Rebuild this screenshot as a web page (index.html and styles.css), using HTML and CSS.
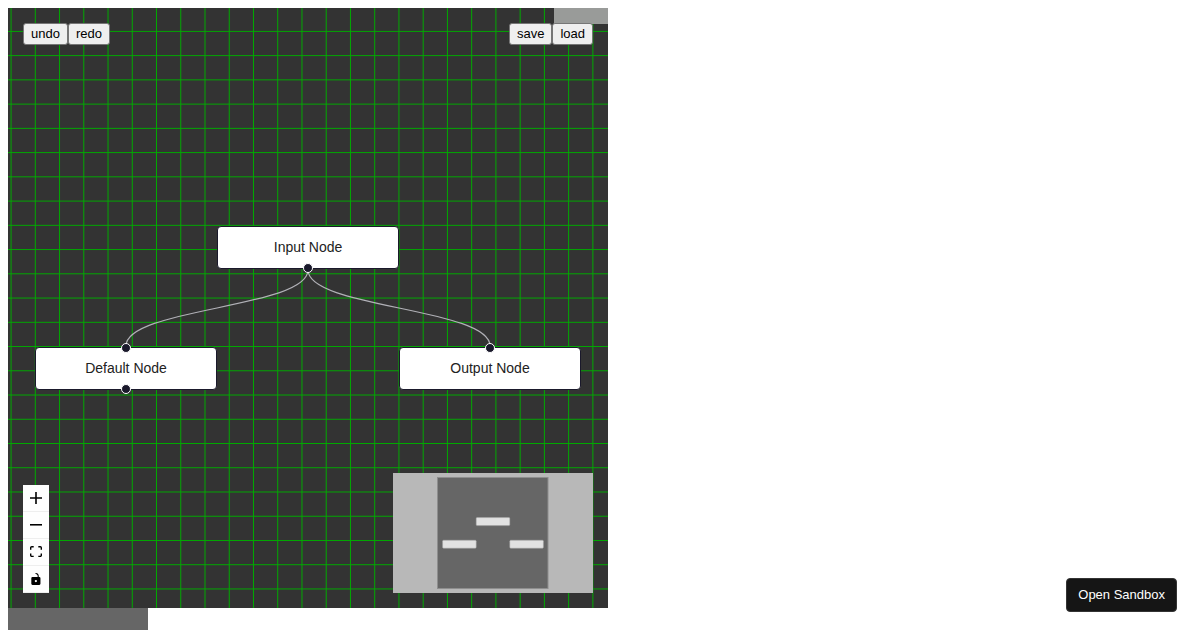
FILE: index.html
```html
<!DOCTYPE html>
<html lang="en">
<head>
    <meta charset="utf-8">
    <title>Flow</title>
    <link rel="stylesheet" href="styles.css">
</head>
<body>
    <div class="flow">
        <svg class="background" aria-hidden="true">
            <pattern id="grid" x="-9.06" y="11.26" width="24.2424" height="24.2424" patternUnits="userSpaceOnUse">
                <path d="M12.12 0V24.2424M0 12.12H24.2424" stroke="#00aa00" stroke-width="1"/>
            </pattern>
            <rect width="100%" height="100%" fill="url(#grid)"/>
        </svg>
        <div class="overview-strip"></div>

        <div class="viewport">
            <svg class="edges" width="600" height="600" aria-hidden="true">
                <path d="M300 262C300 300 118 300 118 338"/>
                <path d="M300 262C300 300 482 300 482 338"/>
            </svg>
            <div class="node node-input">Input Node<span class="handle handle-bottom"></span></div>
            <div class="node node-default"><span class="handle handle-top"></span>Default Node<span class="handle handle-bottom"></span></div>
            <div class="node node-output"><span class="handle handle-top"></span>Output Node</div>
        </div>

        <div class="toolbar">
            <div class="group">
                <button class="btn">undo</button>
                <button class="btn">redo</button>
            </div>
            <div class="group">
                <button class="btn">save</button>
                <button class="btn">load</button>
            </div>
        </div>

        <div class="bottom">
            <div class="controls">
                <button class="control" aria-label="zoom in">
                    <svg viewBox="0 0 32 32"><path d="M32 18.133H18.133V32h-4.266V18.133H0v-4.266h13.867V0h4.266v13.867H32z"/></svg>
                </button>
                <button class="control" aria-label="zoom out">
                    <svg viewBox="0 0 32 5"><path d="M0 0h32v4.2H0z"/></svg>
                </button>
                <button class="control" aria-label="fit view">
                    <svg viewBox="0 0 32 30"><path d="M3.692 4.63c0-.53.4-.938.939-.938h5.215V0H4.708C2.13 0 0 2.054 0 4.63v5.216h3.692V4.631zM27.354 0h-5.2v3.692h5.17c.53 0 .984.4.984.939v5.215H32V4.631A4.624 4.624 0 0027.354 0zm.954 24.83c0 .532-.4.94-.939.94h-5.215v3.768h5.215c2.577 0 4.631-2.13 4.631-4.707v-5.139h-3.692v5.139zm-23.677.94c-.531 0-.939-.4-.939-.94v-5.138H0v5.139c0 2.577 2.13 4.707 4.708 4.707h5.138V25.77H4.631z"/></svg>
                </button>
                <button class="control" aria-label="toggle interactivity">
                    <svg viewBox="0 0 25 32"><path d="M21.333 10.667H19.81V7.619C19.81 3.429 16.38 0 12.19 0c-4.114 1.828-1.37 2.133.305 2.438 1.676.305 4.42 2.59 4.42 5.181v3.048H3.047A3.056 3.056 0 000 13.714v15.238A3.056 3.056 0 003.048 32h18.285a3.056 3.056 0 003.048-3.048V13.714a3.056 3.056 0 00-3.047-3.047zM12.19 24.533a3.056 3.056 0 01-3.047-3.047 3.056 3.056 0 013.047-3.048 3.056 3.056 0 013.048 3.048 3.056 3.056 0 01-3.048 3.047z"/></svg>
                </button>
            </div>
            <svg class="minimap" width="200" height="120" aria-hidden="true">
                <rect width="200" height="120" fill="#b8b8b8"/>
                <rect x="44.5" y="4.5" width="110.5" height="111" fill="#666" stroke="#8e8e8e"/>
                <g fill="#e2e2e2" stroke="#a5a5a5" stroke-width=".5">
                    <rect x="83.2" y="44.6" width="33.6" height="8" rx="1"/>
                    <rect x="49.6" y="67.2" width="33.6" height="8" rx="1"/>
                    <rect x="116.8" y="67.2" width="33.6" height="8" rx="1"/>
                </g>
            </svg>
        </div>
    </div>
    <div class="footer-strip"></div>

    <button class="open-sandbox">Open Sandbox</button>
</body>
</html>
```
FILE: styles.css
```css
* {
    box-sizing: border-box;
}

body {
    display: flex;
    flex-direction: column;
    min-height: 100vh;
    margin: 0;
    padding: 8px 8px 0;
    background: #fff;
    font-family: "Liberation Sans", Arial, sans-serif;
}

.flow {
    position: relative;
    display: flex;
    flex-direction: column;
    justify-content: space-between;
    width: 50vw;
    min-height: 600px;
    padding: 15px;
    overflow: hidden;
    background: #333;
}

.background {
    position: absolute;
    top: 0;
    left: 0;
    width: 100%;
    height: 100%;
}

.overview-strip {
    position: absolute;
    top: 0;
    right: 0;
    width: 54px;
    height: 16px;
    background: #999b99;
}

/* nodes and edges */
.viewport {
    position: absolute;
    top: 0;
    left: 0;
}

.edges {
    display: block;
    fill: none;
    stroke: #b1b1b7;
    stroke-width: 1.2;
}

.node {
    position: absolute;
    width: 182px;
    height: 43px;
    border: 1px solid #1a192b;
    border-radius: 4px;
    background: #fff;
    color: #222;
    font-size: 14px;
    line-height: 41px;
    text-align: center;
}

.node-input {
    top: 218px;
    left: 209px;
}

.node-default {
    top: 339px;
    left: 27px;
}

.node-output {
    top: 339px;
    left: 391px;
}

.handle {
    position: absolute;
    left: 85px;
    width: 10px;
    height: 10px;
    border: 1px solid #fff;
    border-radius: 50%;
    background: #1a192b;
}

.handle-top {
    top: -5px;
}

.handle-bottom {
    bottom: -5px;
}

/* buttons over the canvas */
.toolbar,
.bottom {
    position: relative;
    display: flex;
    justify-content: space-between;
}

.bottom {
    align-items: flex-end;
}

.group {
    display: flex;
}

.btn {
    height: 22px;
    padding: 0 7px;
    border: 1px solid #767676;
    border-radius: 3px;
    background: #efefef;
    color: #000;
    font-family: inherit;
    font-size: 13px;
    line-height: 20px;
}

.controls {
    display: flex;
    flex-direction: column;
}

.control {
    display: flex;
    align-items: center;
    justify-content: center;
    width: 26px;
    height: 27px;
    padding: 5px;
    border: none;
    border-bottom: 1px solid #eee;
    background: #fefefe;
}

.control svg {
    width: 12px;
    max-height: 12px;
}

.minimap {
    display: block;
}

.footer-strip {
    flex: 1;
    width: 140px;
    background: #666;
}

.open-sandbox {
    position: fixed;
    right: 23px;
    bottom: 18px;
    height: 34px;
    padding: 0 11px 2px;
    border: 1px solid #343434;
    border-radius: 4px;
    background: #151515;
    color: #fff;
    font-family: inherit;
    font-size: 13px;
}
```
